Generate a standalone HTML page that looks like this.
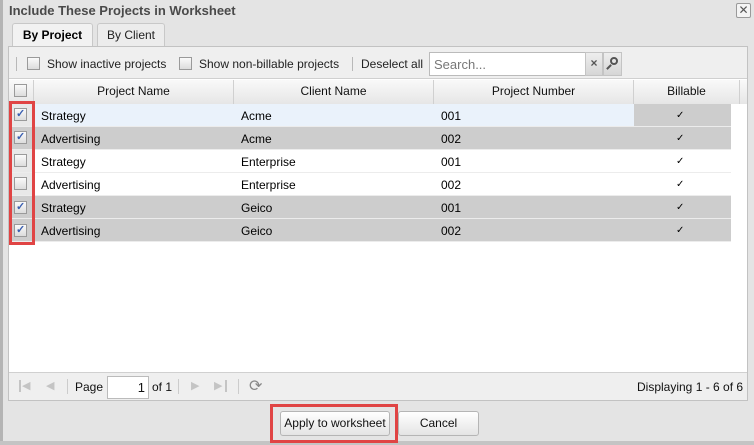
<!DOCTYPE html>
<html><head><meta charset="utf-8"><style>
*{box-sizing:border-box;margin:0;padding:0}
body{width:754px;height:445px;overflow:hidden;background:#e4e4e4;font-family:"Liberation Sans",Arial,sans-serif;font-size:12px;color:#000;position:relative}
.a{position:absolute}
.cb{position:absolute;width:13px;height:13px;border:1px solid #9a9a9a;background:linear-gradient(#fafafa,#dcdcdc)}
.cb.on::after{content:"✓";position:absolute;left:1px;top:-2px;font-size:11px;color:#3a5fb0;font-weight:bold}
.row{position:absolute;left:9px;width:722px;height:23px;border-bottom:1px solid #ececec}
.row span{position:absolute;top:5px}
.row span.ck{left:667px;top:6px;font-size:10px}
.hd{position:absolute;top:80px;height:24px;border-right:1px solid #d0d0d0;background:linear-gradient(#f9f9f9,#e6e6e6);text-align:center;line-height:23px;color:#111}
.sep{position:absolute;width:1px;background:#b8b8b8}
</style></head><body>
<div class="a" style="left:0;top:0;width:3px;height:445px;background:#b4b4b4"></div>
<div class="a" style="left:0;top:441px;width:754px;height:4px;background:#c4c4c4"></div>
<div class="a" style="left:9px;top:3px;font-weight:bold;font-size:13px;color:#4a4a4a">Include These Projects in Worksheet</div>
<div class="a" style="left:736px;top:3px;width:15px;height:15px;border:1px solid #9a9a9a;border-radius:2px;background:#f4f4f4;font-size:12px;line-height:13px;text-align:center;color:#555">✕</div>
<!-- tabs -->
<div class="a" style="left:12px;top:23px;width:81px;height:24px;border:1px solid #c8c8c8;border-bottom:none;border-radius:3px 3px 0 0;background:#f2f2f2;font-weight:bold;text-align:center;line-height:22px">By Project</div>
<div class="a" style="left:97px;top:23px;width:68px;height:23px;border:1px solid #c8c8c8;border-bottom:none;border-radius:3px 3px 0 0;background:#ececec;text-align:center;line-height:22px;color:#222">By Client</div>
<div class="a" style="left:8px;top:46px;width:740px;height:355px;border:1px solid #c2c2c2;background:#fff"></div>
<!-- toolbar -->
<div class="a" style="left:9px;top:47px;width:738px;height:32px;background:#efefef;border-bottom:1px solid #d0d0d0"></div>
<div class="sep" style="left:16px;top:57px;height:14px"></div>
<div class="cb" style="left:27px;top:57px"></div>
<div class="a" style="left:47px;top:57px;color:#222">Show inactive projects</div>
<div class="cb" style="left:179px;top:57px"></div>
<div class="a" style="left:199px;top:57px;color:#222">Show non-billable projects</div>
<div class="sep" style="left:352px;top:57px;height:14px"></div>
<div class="a" style="left:361px;top:57px;color:#222">Deselect all</div>
<div class="a" style="left:429px;top:52px;width:157px;height:24px;border:1px solid #bbb;background:#fff;color:#777;padding:5px 4px;font-size:13px;line-height:13px">Search...</div>
<div class="a" style="left:585px;top:52px;width:18px;height:24px;background:linear-gradient(#eee,#d6d6d6);border:1px solid #c4c4c4;text-align:center;line-height:21px;color:#555;font-weight:bold">×</div>
<div class="a" style="left:603px;top:52px;width:19px;height:24px;background:linear-gradient(#eee,#d6d6d6);border:1px solid #c4c4c4"><div class="a" style="left:6px;top:4px;width:8px;height:8px;border:2px solid #555;border-radius:50%"></div><div class="a" style="left:4px;top:11px;width:2px;height:6px;background:#555;transform:rotate(45deg)"></div></div>
<!-- header -->
<div class="hd" style="left:9px;width:25px"></div>
<div class="cb" style="left:14px;top:84px"></div>
<div class="hd" style="left:34px;width:200px">Project Name</div>
<div class="hd" style="left:234px;width:200px">Client Name</div>
<div class="hd" style="left:434px;width:200px">Project Number</div>
<div class="hd" style="left:634px;width:106px">Billable</div>
<div class="hd" style="left:740px;width:7px;border:none"></div>
<!-- rows -->
<div class="row" style="top:104px;background:#eaf2fb"><div class="a" style="left:0;top:0;width:25px;height:22px;background:#e8e8e8"></div><div class="a" style="left:625px;top:0;width:97px;height:22px;background:#cdcdcd"></div><div class="cb on" style="left:5px;top:4px"></div><span style="left:32px">Strategy</span><span style="left:232px">Acme</span><span style="left:432px">001</span><span class="ck">✓</span></div>
<div class="row" style="top:127px;background:#cdcdcd"><div class="cb on" style="left:5px;top:4px"></div><span style="left:32px">Advertising</span><span style="left:232px">Acme</span><span style="left:432px">002</span><span class="ck">✓</span></div>
<div class="row" style="top:150px;background:#fff"><div class="a" style="left:0;top:0;width:25px;height:22px;background:#e8e8e8"></div><div class="cb" style="left:5px;top:4px"></div><span style="left:32px">Strategy</span><span style="left:232px">Enterprise</span><span style="left:432px">001</span><span class="ck">✓</span></div>
<div class="row" style="top:173px;background:#fff"><div class="a" style="left:0;top:0;width:25px;height:22px;background:#e8e8e8"></div><div class="cb" style="left:5px;top:4px"></div><span style="left:32px">Advertising</span><span style="left:232px">Enterprise</span><span style="left:432px">002</span><span class="ck">✓</span></div>
<div class="row" style="top:196px;background:#cdcdcd"><div class="cb on" style="left:5px;top:5px"></div><span style="left:32px">Strategy</span><span style="left:232px">Geico</span><span style="left:432px">001</span><span class="ck">✓</span></div>
<div class="row" style="top:219px;background:#cdcdcd"><div class="cb on" style="left:5px;top:5px"></div><span style="left:32px">Advertising</span><span style="left:232px">Geico</span><span style="left:432px">002</span><span class="ck">✓</span></div>
<div class="a" style="left:9px;top:101px;width:26px;height:144px;border:3px solid #e04444"></div>
<!-- paging -->
<div class="a" style="left:9px;top:372px;width:738px;height:28px;background:#efefef;border-top:1px solid #d0d0d0"></div>
<div class="a" style="left:19px;top:380px;width:2px;height:12px;background:#c4c4c4"></div>
<div class="a" style="left:22px;top:379px;color:#c4c4c4;font-size:11px">◀</div>
<div class="a" style="left:46px;top:379px;color:#c4c4c4;font-size:11px">◀</div>
<div class="sep" style="left:67px;top:379px;height:15px;background:#ccc"></div>
<div class="a" style="left:75px;top:380px;color:#111">Page</div>
<div class="a" style="left:107px;top:376px;width:42px;height:23px;border:1px solid #bbb;background:#fff;text-align:right;padding:4px 3px;color:#111;font-size:13px;line-height:13px">1</div>
<div class="a" style="left:152px;top:380px;color:#111">of 1</div>
<div class="sep" style="left:178px;top:379px;height:15px;background:#ccc"></div>
<div class="a" style="left:191px;top:379px;color:#c4c4c4;font-size:11px">▶</div>
<div class="a" style="left:214px;top:379px;color:#c4c4c4;font-size:11px">▶</div>
<div class="a" style="left:225px;top:380px;width:2px;height:12px;background:#c4c4c4"></div>
<div class="sep" style="left:238px;top:379px;height:15px;background:#ccc"></div>
<div class="a" style="left:249px;top:376px;color:#888;font-size:16px">⟳</div>
<div class="a" style="left:637px;top:380px;color:#111">Displaying 1 - 6 of 6</div>
<!-- buttons -->
<div class="a" style="left:280px;top:411px;width:110px;height:25px;border:1px solid #b5b5b5;border-radius:3px;background:linear-gradient(#fff,#e4e4e4);text-align:center;line-height:23px;color:#111">Apply to worksheet</div>
<div class="a" style="left:270px;top:404px;width:128px;height:39px;border:3px solid #e04444"></div>
<div class="a" style="left:398px;top:411px;width:81px;height:25px;border:1px solid #b5b5b5;border-radius:3px;background:linear-gradient(#fff,#e4e4e4);text-align:center;line-height:23px;color:#111">Cancel</div>
</body></html>
